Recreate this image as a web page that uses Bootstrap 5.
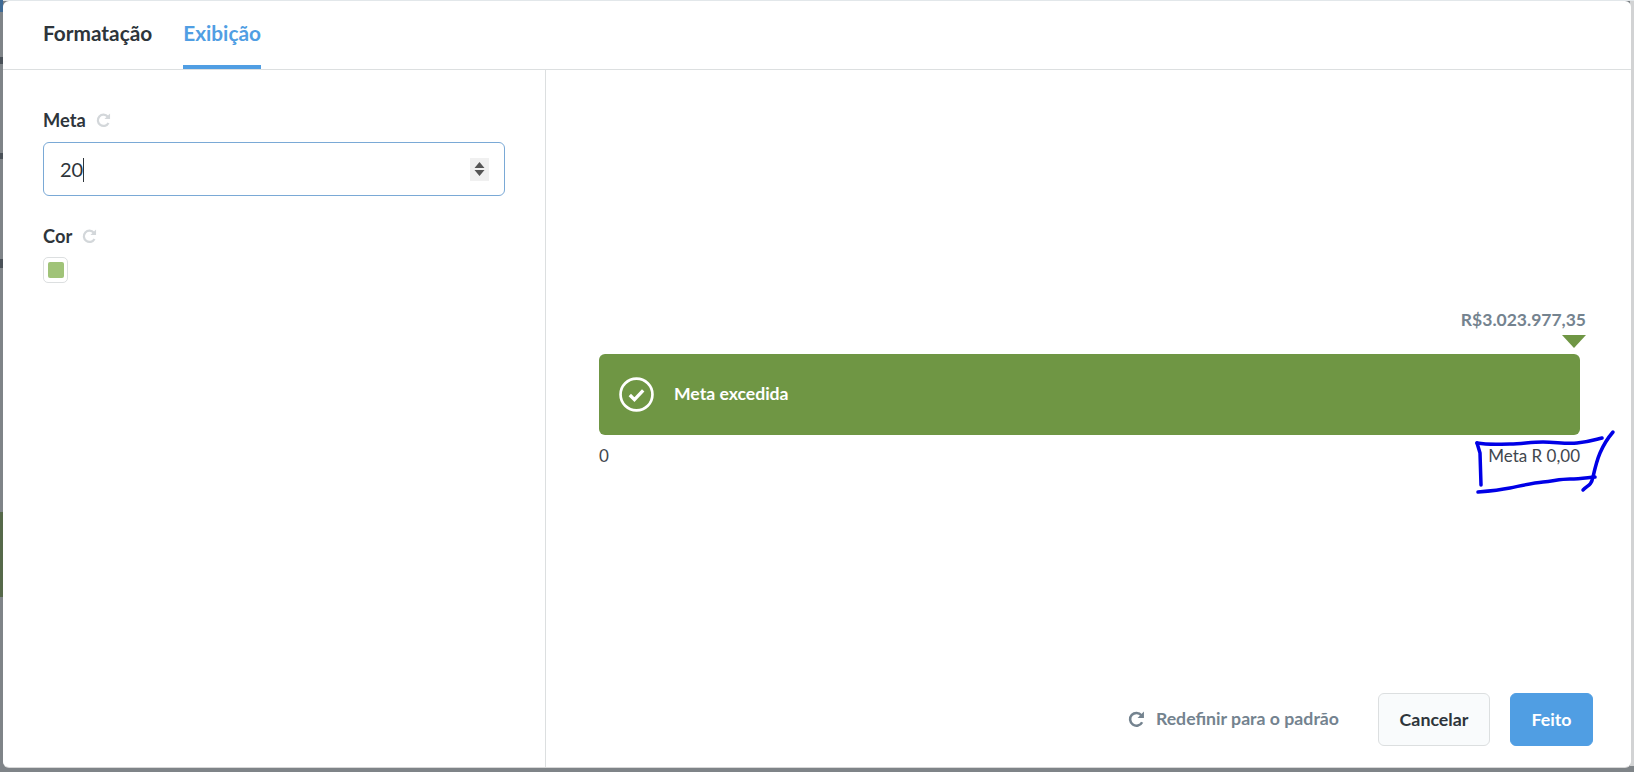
<!DOCTYPE html>
<html lang="pt-BR">
<head>
<meta charset="utf-8">
<title>Exibição</title>
<link href="https://cdn.jsdelivr.net/npm/bootstrap@5.3.0/dist/css/bootstrap.min.css" rel="stylesheet">
<style>
html,body{height:100%;margin:0}
body{background-color:#7f8488;background-image:linear-gradient(#e2e7ea,#e2e7ea),linear-gradient(#d2d3d4,#d2d3d4);background-size:100% 1px,4px 766px;background-position:0 0,100% 0;background-repeat:no-repeat;font-family:"Lato","Liberation Sans",sans-serif;color:#2e353b;overflow:hidden;padding:1px 3px 4px 3px}
.shell{height:766px;background:#fff;border-radius:6px;position:relative;box-shadow:0 1px 0 #d8d8d8}
.tabbar{height:69px;border-bottom:1px solid #dcdfe0;padding-left:40px;gap:31px}
.tabitem{height:68px;line-height:64px;font-size:20.8px;font-weight:700;color:#2e353b;text-decoration:none}
.tabitem.on{color:#509ee3;border-bottom:4px solid #509ee3}
.bodyrow{height:697px}
.sidepane{width:543px;border-right:1px solid #dcdfe0;padding:38px 40px 0 40px;flex:none}
.fieldlabel{font-size:18.3px;font-weight:700;line-height:24px;color:#2e353b;gap:10px}
.resetico{width:15px;height:15px;color:#d3d7da}
.numbox{height:54px;border:1px solid #7aa9d6;border-radius:6px;margin:10px 0 28px;padding:0 15px 0 16px}
.numval{font-size:20px;line-height:24px}
.caretbar{display:inline-block;width:1px;height:24px;background:#2e353b;vertical-align:-5px}
.spinbox{width:19px;height:23px;background:#f0f0f0}
.swatchbox{width:25px;height:26px;border:1px solid #dcdfe0;border-radius:5px;margin-top:9px}
.swatchfill{width:16px;height:16px;background:#a0c378;border-radius:2px}
.mainpane{min-width:0;padding:0 51px 0 53px;position:relative}
.goalarea{padding-top:239px}
.amount{font-size:17.5px;font-weight:700;color:#74838f;line-height:22px;text-align:right;margin-right:-6px}
.pointer{width:0;height:0;border-left:12.5px solid transparent;border-right:12.5px solid transparent;border-top:13px solid #6f9644;margin:4px -6px 6px auto}
.goalbar{height:81px;background:#6f9644;border-radius:6px;padding-left:20px;gap:20px;color:#fff;font-weight:700;font-size:17.6px}
.axisrow{font-size:17px;line-height:20px;color:#3f474e;margin-top:11px}
.scribble{position:absolute;left:1467px;top:425px;width:160px;height:80px;pointer-events:none}
.footbar{position:absolute;right:38px;bottom:21px;gap:20px}
.resetlink{color:#74838f;font-size:17.7px;font-weight:700;gap:11px;margin-right:19px;padding:0}
.resetlink svg{width:17px;height:17px}
.btncancel,.btndone{height:53px;font-weight:700;font-size:17.8px;border-radius:6px;padding:0}
.btncancel{width:112px;background:#f9fbfc;border:1px solid #dcdfe0;color:#2e353b}
.btndone{width:83px;background:#509ee3;border:1px solid #509ee3;color:#fff}
.gutter{position:absolute;left:-3px;width:3px}
.gutter-a{top:511px;height:85px;background:#56694a}
.gutter-b{top:56px;height:7px;background:#4a5158}
.gutter-c{top:152px;height:6px;background:#4a5158}
.gutter-d{top:258px;height:9px;background:#4a5158}
.gutter-e{top:-1px;height:12px;background:#3e6a95}
</style>
</head>
<body>
<div class="shell d-flex flex-column">
  <span class="gutter gutter-a"></span><span class="gutter gutter-b"></span><span class="gutter gutter-c"></span><span class="gutter gutter-d"></span><span class="gutter gutter-e"></span>
  <nav class="tabbar d-flex">
    <a class="tabitem" href="#">Formatação</a>
    <a class="tabitem on" href="#">Exibição</a>
  </nav>
  <div class="bodyrow d-flex">
    <aside class="sidepane">
      <div class="fieldlabel d-flex align-items-center">Meta
        <svg class="resetico" viewBox="0 0 16 16" fill="none" stroke="currentColor" stroke-width="2.4"><path d="M13.3 10.6A6 6 0 1 1 12.6 4"/><path d="M15 .5v6H9z" fill="currentColor" stroke="none"/></svg>
      </div>
      <div class="numbox d-flex align-items-center justify-content-between">
        <span class="numval">20<span class="caretbar"></span></span>
        <span class="spinbox d-flex align-items-center justify-content-center">
          <svg width="11" height="16" viewBox="0 0 11 16" fill="#555"><path d="M5.5 1 10.5 7H.5zM.5 9h10l-5 6z"/></svg>
        </span>
      </div>
      <div class="fieldlabel d-flex align-items-center">Cor
        <svg class="resetico" viewBox="0 0 16 16" fill="none" stroke="currentColor" stroke-width="2.4"><path d="M13.3 10.6A6 6 0 1 1 12.6 4"/><path d="M15 .5v6H9z" fill="currentColor" stroke="none"/></svg>
      </div>
      <div class="swatchbox d-flex align-items-center justify-content-center"><span class="swatchfill"></span></div>
    </aside>
    <main class="mainpane flex-grow-1">
      <div class="goalarea">
        <div class="amount">R$3.023.977,35</div>
        <div class="pointer"></div>
        <div class="goalbar d-flex align-items-center">
          <svg width="35" height="35" viewBox="0 0 34 34" fill="none" stroke="#fff"><circle cx="17" cy="17" r="15.5" stroke-width="2.6"/><path d="M10.5 17.5 15 22l8.5-9" stroke-width="3.2"/></svg>
          <span>Meta excedida</span>
        </div>
        <div class="axisrow d-flex justify-content-between"><span>0</span><span>Meta R 0,00</span></div>
      </div>
    </main>
  </div>
  <div class="footbar d-flex align-items-center">
    <button class="resetlink btn border-0 d-flex align-items-center" type="button">
      <svg viewBox="0 0 16 16" fill="none" stroke="currentColor" stroke-width="2.4"><path d="M13.3 10.6A6 6 0 1 1 12.6 4"/><path d="M15 .5v6H9z" fill="currentColor" stroke="none"/></svg>
      Redefinir para o padrão</button>
    <button class="btn btncancel" type="button">Cancelar</button>
    <button class="btn btndone" type="button">Feito</button>
  </div>
  <svg class="scribble" viewBox="0 0 160 80" fill="none" stroke="#0000e6" stroke-width="3.5" stroke-linecap="round" stroke-linejoin="round">
    <path d="M7 17C20 19 28 18 40 18S60 16 73 16 95 18 107 17 124 14 132 12"/>
    <path d="M7 17 10 27 11 59"/>
    <path d="M8 66C20 65 30 64 40 62S62 57 73 56 90 53 100 53 115 52 125 51"/>
    <path d="M143 6C137 13 133 20 130 27S125 42 123 51 118 59 113 64"/>
  </svg>
</div>
<script src="https://cdn.jsdelivr.net/npm/bootstrap@5.3.0/dist/js/bootstrap.bundle.min.js"></script>
</body>
</html>
